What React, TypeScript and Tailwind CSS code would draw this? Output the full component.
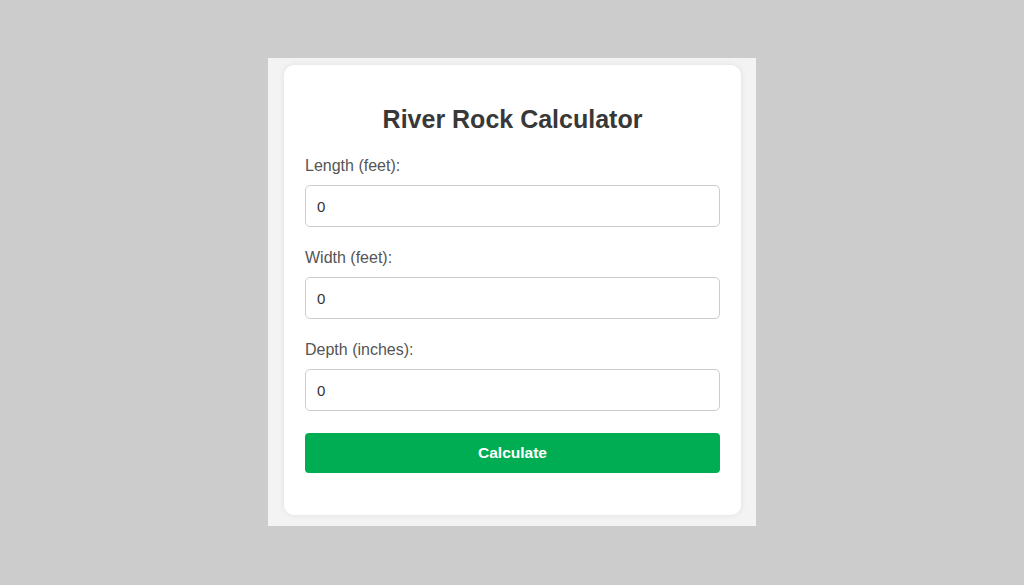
import React from "react";

const fields = ["Length (feet):", "Width (feet):", "Depth (inches):"];

export default function App() {
  return (
    <div
      className="w-[1024px] h-[585px] bg-[#cccccc] flex justify-center pt-[58px]"
      style={{ fontFamily: '"Liberation Sans", Arial, sans-serif' }}
    >
      <div className="w-[488px] h-[468px] bg-[#f3f3f3] pt-[7px] pl-[16px]">
        <div className="w-[457px] h-[450px] bg-white rounded-[10px] shadow-[0_0_6px_rgba(0,0,0,0.08)] px-[21px] pt-[40px]">
          <h2 className="text-[25px] leading-[29px] font-bold text-[#383838] text-center">
            River Rock Calculator
          </h2>
          <div className="mt-[23px] flex flex-col">
            {fields.map((f, i) => (
              <div key={f} className={i > 0 ? "mt-[22px]" : ""}>
                <label className="block text-[16px] leading-[18px] text-[#555555]">{f}</label>
                <input
                  readOnly
                  value="0"
                  className="mt-[10px] block w-[415px] h-[42px] rounded-[5px] border border-[#cccccc] px-[11px] text-[15px] text-[#333333] outline-none"
                />
              </div>
            ))}
            <button className="mt-[22px] w-[415px] h-[40px] rounded-[4px] bg-[#00ad52] text-white text-[15.5px] font-semibold">
              Calculate
            </button>
          </div>
        </div>
      </div>
    </div>
  );
}
